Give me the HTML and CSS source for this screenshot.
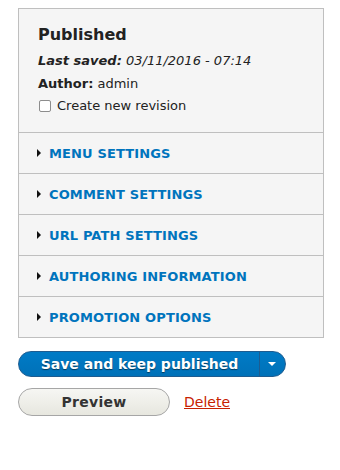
FILE: index.html
```html
<!DOCTYPE html>
<html>
<head>
<meta charset="utf-8">
<link rel="stylesheet" href="styles.css">
</head>
<body>
<div class="page">
  <div class="panel">
    <div class="meta">
      <h3 class="status">Published</h3>
      <div class="saved"><b>Last saved:</b> 03/11/2016 - 07:14</div>
      <div class="author"><b>Author:</b> admin</div>
      <label class="revision"><span class="checkbox"></span>Create new revision</label>
    </div>
    <div class="section"><span class="arrow"></span><span class="label">Menu settings</span></div>
    <div class="section"><span class="arrow"></span><span class="label">Comment settings</span></div>
    <div class="section"><span class="arrow"></span><span class="label">URL path settings</span></div>
    <div class="section"><span class="arrow"></span><span class="label">Authoring information</span></div>
    <div class="section"><span class="arrow"></span><span class="label">Promotion options</span></div>
  </div>
  <div class="actions">
    <div class="split">
      <span class="save">Save and keep published</span>
      <span class="toggle"><span class="caret"></span></span>
    </div>
    <div class="row">
      <span class="preview">Preview</span>
      <a class="delete" href="#">Delete</a>
    </div>
  </div>
</div>
</body>
</html>
```

FILE: styles.css
```css
html, body {
  margin: 0;
  padding: 0;
  background: #fff;
}
body {
  font-family: "DejaVu Sans", sans-serif;
  color: #222;
}
.page {
  padding: 8px 16px 0 18px;
}
.panel {
  width: 304px;
  border: 1px solid #bfbfbf;
  background: #f5f5f5;
}
.meta {
  padding: 16px 19px 18px 19px;
  border-bottom: 1px solid #bfbfbf;
}
.status {
  margin: 0;
  font-size: 16px;
  font-weight: bold;
  line-height: 20px;
  color: #222;
}
.saved {
  margin-top: 7px;
  font-size: 13px;
  font-style: italic;
  line-height: 17px;
}
.author {
  margin-top: 6px;
  font-size: 13px;
  line-height: 17px;
}
.revision {
  display: flex;
  align-items: center;
  margin-top: 5px;
  font-size: 13px;
  line-height: 17px;
}
.checkbox {
  width: 10px;
  height: 10px;
  border: 1px solid #8d8d8d;
  border-radius: 2px;
  background: #fff;
  margin: 0 6px 0 1px;
}
.section {
  display: flex;
  align-items: center;
  height: 40px;
  padding-left: 18px;
  border-bottom: 1px solid #bfbfbf;
}
.section:last-child {
  border-bottom: none;
}
.arrow {
  width: 0;
  height: 0;
  border-left: 4px solid #111;
  border-top: 4px solid transparent;
  border-bottom: 4px solid transparent;
  margin-right: 8px;
}
.label {
  font-size: 13px;
  font-weight: bold;
  text-transform: uppercase;
  letter-spacing: 0.01em;
  color: #0074bd;
}
.actions {
  padding-top: 13px;
}
.split {
  display: flex;
  width: 268px;
  height: 26px;
  border-radius: 13px;
  background: linear-gradient(#007bc6, #0071b8);
  border: 1px solid #1e5c90;
  box-sizing: border-box;
  overflow: hidden;
}
.save {
  flex: 1;
  display: flex;
  align-items: center;
  justify-content: center;
  color: #fff;
  font-weight: bold;
  font-size: 14px;
  letter-spacing: 0;
  text-shadow: 0 1px 1px rgba(0,0,0,0.5);
  border-right: 1px solid #1e5c90;
  padding-left: 1px;
}
.toggle {
  width: 25px;
  display: flex;
  align-items: center;
  justify-content: center;
}
.caret {
  width: 0;
  height: 0;
  border-top: 4px solid #fff;
  border-left: 4px solid transparent;
  border-right: 4px solid transparent;
  margin-right: 2px;
}
.row {
  display: flex;
  align-items: center;
  margin-top: 11px;
}
.preview {
  width: 152px;
  height: 28px;
  box-sizing: border-box;
  border: 1px solid #a6a6a6;
  border-radius: 14px;
  background: linear-gradient(#f6f6f3, #e7e7df);
  display: flex;
  align-items: center;
  justify-content: center;
  font-weight: bold;
  font-size: 14px;
  color: #333;
  letter-spacing: 0.02em;
}
.delete {
  margin-left: 14px;
  font-size: 14px;
  color: #c72100;
  text-decoration: underline;
}
```
